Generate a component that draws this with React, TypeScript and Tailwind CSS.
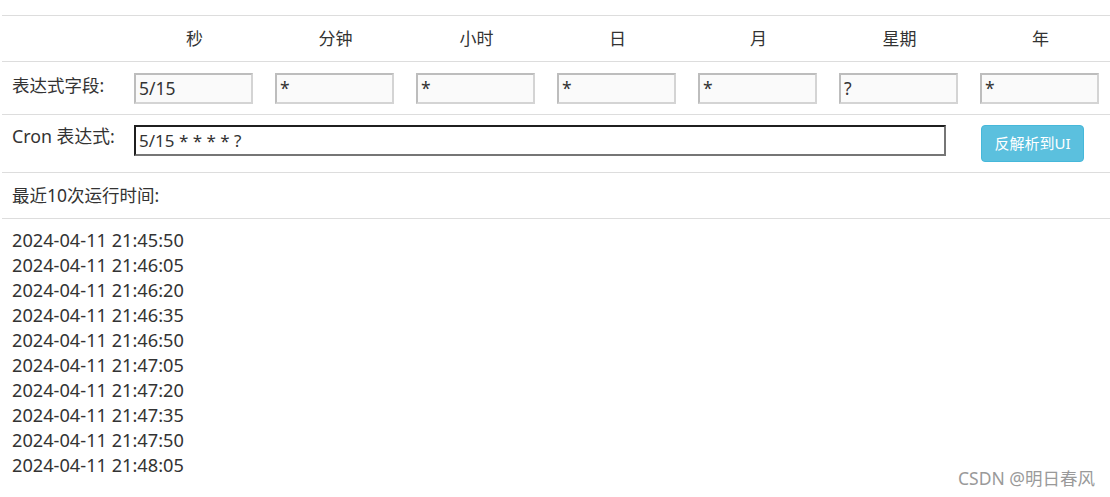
const headers = ["秒", "分钟", "小时", "日", "月", "星期", "年"];
const fields = ["5/15", "*", "*", "*", "*", "?", "*"];
const times = [
  "2024-04-11 21:45:50",
  "2024-04-11 21:46:05",
  "2024-04-11 21:46:20",
  "2024-04-11 21:46:35",
  "2024-04-11 21:46:50",
  "2024-04-11 21:47:05",
  "2024-04-11 21:47:20",
  "2024-04-11 21:47:35",
  "2024-04-11 21:47:50",
  "2024-04-11 21:48:05",
];

const font = "font-['Noto_Sans','Noto_Sans_CJK_SC',sans-serif]";

export default function App() {
  return (
    <div className={`relative w-[1110px] h-[497px] bg-white text-[#333] ${font} text-[17px]`}>
      <div className="pt-[15px] pl-[2px]">
        {/* Header row */}
        <div className="grid grid-cols-[122px_repeat(7,141px)] h-[46px] border-t border-[#dddddd] items-center">
          <div />
          {headers.map((h) => (
            <div key={h} className="text-center">
              {h}
            </div>
          ))}
        </div>

        {/* Field row */}
        <div className="grid grid-cols-[122px_repeat(7,141px)] h-[53px] border-t border-[#dddddd] items-center">
          <div className="pl-[10px] -mt-[6px] text-[17.5px]">表达式字段:</div>
          {fields.map((f, i) => (
            <div key={i} className="pl-[10px]">
              <div className="w-[119px] h-[31px] bg-[#fafafa] border-2 border-t-[#bdbdbd] border-l-[#bdbdbd] border-r-[#d4d4d4] border-b-[#d4d4d4] pl-[3px] leading-[27px] text-[17.5px]">
                {f}
              </div>
            </div>
          ))}
        </div>

        {/* Cron row */}
        <div className="flex h-[58px] border-t border-[#dddddd] pt-[10px]">
          <div className="w-[122px] pl-[10px] leading-[22px] text-[17.8px]">Cron 表达式:</div>
          <div className="ml-[10px] w-[812px] h-[31px] border-2 border-t-[#1f1f1f] border-l-[#1f1f1f] border-r-[#767676] border-b-[#767676] pl-[3px] leading-[27px]">
            5/15 * * * * ?
          </div>
          <button className="ml-[35px] w-[103px] h-[37px] rounded-[4px] bg-[#5bc0de] border border-[#46b8da] text-white text-[15px]">
            反解析到UI
          </button>
        </div>

        {/* Label row */}
        <div className="h-[47px] border-t border-b border-[#dddddd] flex items-center pl-[10px] text-[17.5px]">
          最近10次运行时间:
        </div>

        {/* Times */}
        <div className="pl-[10px] pt-[9px] leading-[25px] text-[18.2px]">
          {times.map((t) => (
            <div key={t}>{t}</div>
          ))}
        </div>
      </div>

      <div className="absolute right-[15px] bottom-[6px] text-[17.5px] text-[#9a9a9a]">
        CSDN @明日春风
      </div>
    </div>
  );
}
